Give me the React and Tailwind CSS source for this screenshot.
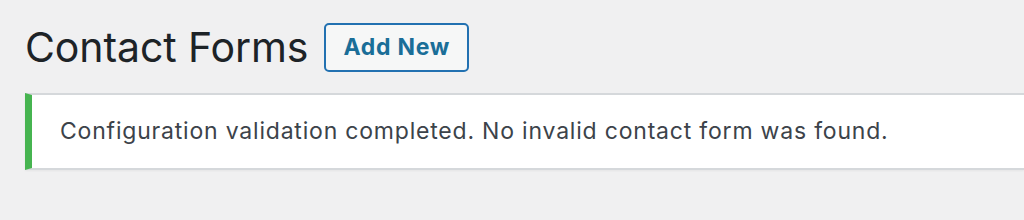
export default function App() {
  return (
    <div className="w-[1024px] h-[220px] bg-[#f0f0f1] overflow-hidden pl-[25px] pt-[23px]" style={{ fontFamily: 'Inter, "Noto Sans", sans-serif' }}>
      <div className="flex items-center gap-[16px]">
        <h1 className="text-[41px] leading-[49px] text-[#1d2327] font-normal tracking-[-0.1px]">Contact Forms</h1>
        <button className="h-[49px] w-[145px] border-2 border-[#2271b1] rounded-[5px] bg-[#f6f7f7] text-[#1a6e98] text-[23px] font-bold tracking-[0.7px]">Add New</button>
      </div>
      <div className="mt-[21px] h-[77px] bg-white border-y-2 border-[#d5d8db] border-l-[7px] border-l-[#46b450] flex items-center pl-[28px] shadow-[0_1px_2px_rgba(0,0,0,0.05)]">
        <p className="text-[23px] text-[#3c434a] tracking-[0.8px]">Configuration validation completed. No invalid contact form was found.</p>
      </div>
    </div>
  );
}
